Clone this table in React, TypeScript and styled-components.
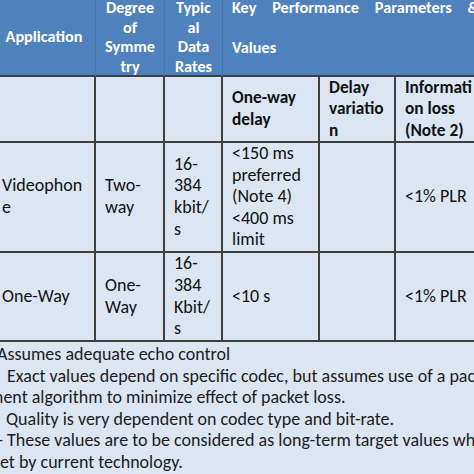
import React from "react";
import styled, { createGlobalStyle } from "styled-components";

const Global = createGlobalStyle`
  html, body { margin: 0; padding: 0; background: #dce6f2; }
  body { width: 474px; height: 474px; overflow: hidden; }
`;

const Page = styled.div`
  width: 474px;
  height: 474px;
  overflow: hidden;
  background: #dce6f2;
  font-family: Carlito, Lato, "Open Sans", sans-serif;
  color: #111;
`;

const Table = styled.div`
  display: grid;
  grid-template-columns: 103px 69px 58px 97px 76px 93px;
  grid-template-rows: 80px 66px 110px 89px;
  width: 496px;
  margin-left: -7px;
  margin-top: -3px;
`;

const HeadCell = styled.div<{ $span?: number; $align?: "top" | "middle"; $center?: boolean }>`
  grid-column: span ${(p) => p.$span ?? 1};
  background: #4f81bd;
  color: #fff;
  font-weight: 700;
  font-size: 16.3px;
  line-height: 20px;
  padding: 0 9px;
  display: flex;
  flex-direction: column;
  justify-content: ${(p) => (p.$align === "top" ? "flex-start" : "center")};
  align-items: ${(p) => (p.$center ? "center" : "stretch")};
  text-align: ${(p) => (p.$center ? "center" : "left")};
  border-right: 1px solid rgba(40, 70, 120, 0.22);
  border-bottom: 2px solid #3d3d3d;
  box-sizing: border-box;
  white-space: nowrap;
`;

const Justified = styled.div`
  display: flex;
  justify-content: space-between;
`;

const Cell = styled.div<{ $bold?: boolean }>`
  background: #dce6f2;
  font-size: ${(p) => (p.$bold ? "17.3px" : "18px")};
  line-height: ${(p) => (p.$bold ? "22px" : "21.6px")};
  font-weight: ${(p) => (p.$bold ? 700 : 400)};
  padding: 0 8px 0 9px;
  display: flex;
  flex-direction: column;
  justify-content: center;
  border-right: 2px solid #404040;
  border-bottom: 2px solid #404040;
  box-sizing: border-box;
  white-space: nowrap;
  overflow: hidden;
`;

const Line = styled.span`
  display: block;
  min-height: 1em;
`;

const Notes = styled.div`
  font-size: 18px;
  line-height: 21.6px;
  color: #1c1c1c;
  white-space: nowrap;
  margin-top: 2px;
`;

const Para = styled.p`
  margin: 0;
`;

const NoteLine = styled.span<{ $shift: number }>`
  display: block;
  margin-left: ${(p) => p.$shift}px;
`;

const lines = (arr: string[]) => arr.map((t, i) => <Line key={i}>{t || "\u00a0"}</Line>);

export default function App() {
  return (
    <Page>
      <Global />
      <Table>
        <HeadCell $center>Application</HeadCell>
        <HeadCell $center>{lines(["Degree", "of", "Symme", "try"])}</HeadCell>
        <HeadCell $center>{lines(["Typic", "al", "Data", "Rates"])}</HeadCell>
        <HeadCell $span={3} $align="top">
          <Justified>
            <span>Key</span>
            <span>Performance</span>
            <span>Parameters</span>
            <span>&amp;</span>
          </Justified>
          <Line>{"\u00a0"}</Line>
          <Line>Values</Line>
        </HeadCell>

        <Cell />
        <Cell />
        <Cell />
        <Cell $bold>{lines(["One-way", "delay"])}</Cell>
        <Cell $bold>{lines(["Delay", "variatio", "n"])}</Cell>
        <Cell $bold>{lines(["Informati", "on loss", "(Note 2)"])}</Cell>

        <Cell>{lines(["Videophon", "e"])}</Cell>
        <Cell>{lines(["Two-", "way"])}</Cell>
        <Cell>{lines(["16-", "384", "kbit/", "s"])}</Cell>
        <Cell>{lines(["<150 ms", "preferred", "(Note 4)", "<400 ms", "limit"])}</Cell>
        <Cell />
        <Cell>{lines(["<1% PLR"])}</Cell>

        <Cell>{lines(["One-Way"])}</Cell>
        <Cell>{lines(["One-", "Way"])}</Cell>
        <Cell>{lines(["16-", "384", "Kbit/", "s"])}</Cell>
        <Cell>{lines(["<10 s"])}</Cell>
        <Cell />
        <Cell>{lines(["<1% PLR"])}</Cell>
      </Table>
      <Notes>
        <Para>
          <NoteLine $shift={-3}>Assumes adequate echo control</NoteLine>
        </Para>
        <Para>
          <NoteLine $shift={7}>Exact values depend on specific codec, but assumes use of a packet</NoteLine>
          <NoteLine $shift={-11}>ment algorithm to minimize effect of packet loss.</NoteLine>
        </Para>
        <Para>
          <NoteLine $shift={6}>Quality is very dependent on codec type and bit-rate.</NoteLine>
        </Para>
        <Para>
          <NoteLine $shift={-2.5}>- These values are to be considered as long-term target values which</NoteLine>
          <NoteLine $shift={0}>et by current technology.</NoteLine>
        </Para>
      </Notes>
    </Page>
  );
}
